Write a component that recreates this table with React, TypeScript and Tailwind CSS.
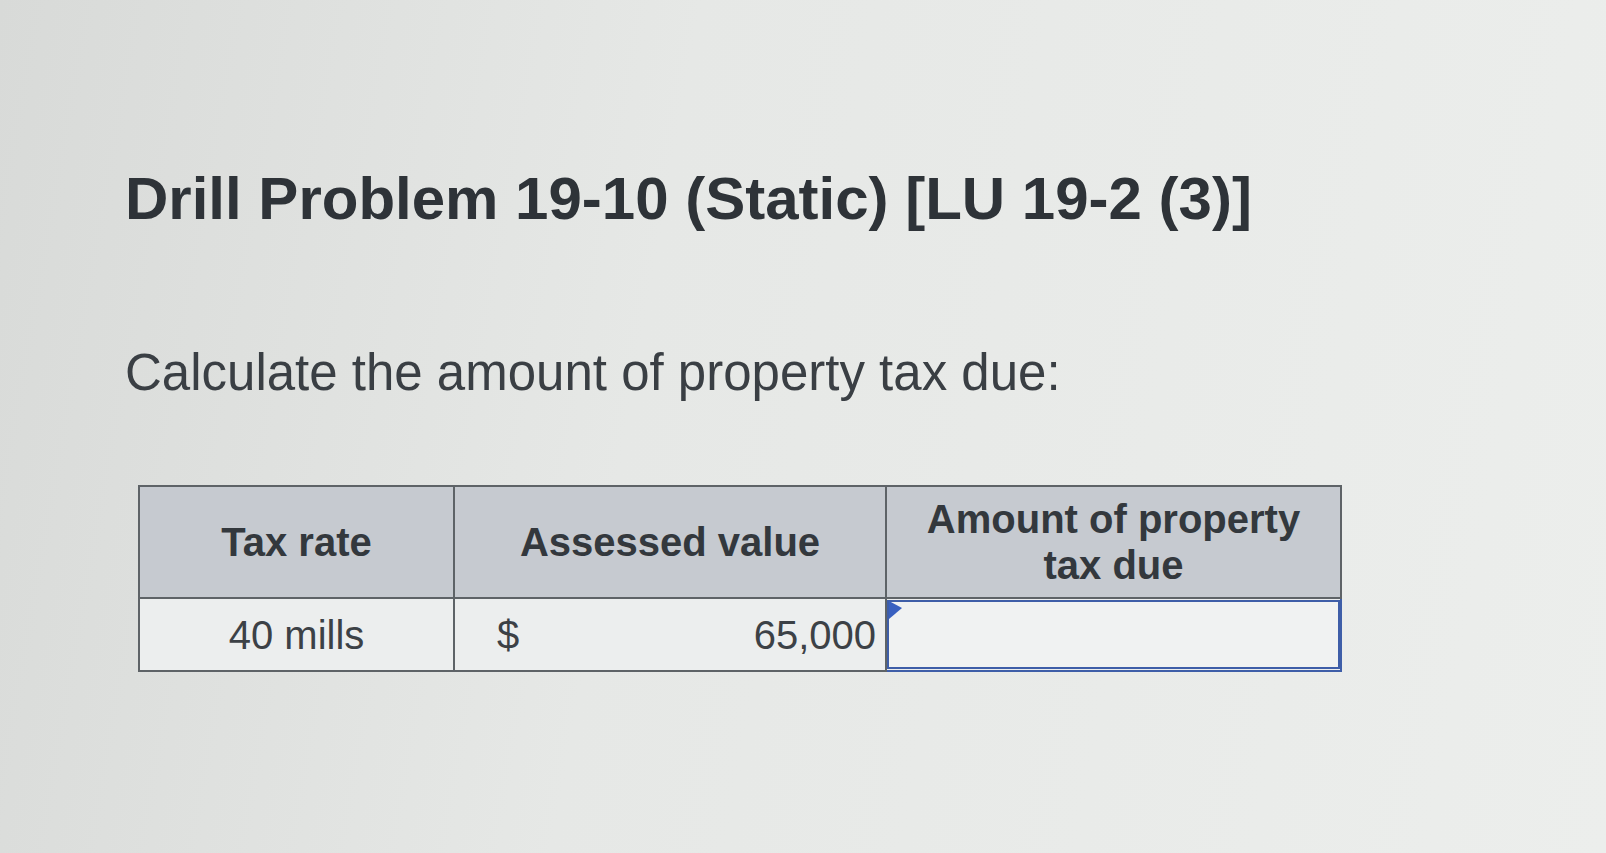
export default function App() {
  return (
    <div className="min-h-[853px] w-full bg-[linear-gradient(100deg,#d8dad8_0%,#e6e8e6_40%,#eceeec_100%)] font-['Liberation_Sans',Arial,sans-serif] text-[#30353a]">
      <div className="pl-[125px] pt-[169px]">
        {/* Title */}
        <h1 className="text-[60px] font-bold leading-none text-[#2e3338]">
          Drill Problem 19-10 (Static) [LU 19-2 (3)]
        </h1>

        {/* Prompt */}
        <p className="mt-[118px] text-[51px] leading-none text-[#3a3f44]">
          Calculate the amount of property tax due:
        </p>

        {/* Table */}
        <table className="mt-[87px] ml-[13px] border-collapse border-2 border-[#5e6367] text-[40px]">
          <thead>
            <tr className="h-[112px] bg-[#c6cad0]">
              <th className="w-[315px] border-2 border-[#5e6367] font-bold leading-[1.15] text-[#33383d]">Tax rate</th>
              <th className="w-[432px] border-2 border-[#5e6367] font-bold leading-[1.15] text-[#33383d]">Assessed value</th>
              <th className="w-[455px] border-2 border-[#5e6367] px-4 font-bold leading-[1.15] text-[#33383d]">
                Amount of property
                <br />
                tax due
              </th>
            </tr>
          </thead>
          <tbody>
            <tr className="h-[73px] bg-[#eceeee]">
              <td className="border-2 border-[#5e6367] text-center text-[#3c4146]">40 mills</td>
              <td className="border-2 border-[#5e6367] text-[#3c4146]">
                <div className="flex items-center justify-between pl-[42px] pr-[9px]">
                  <span>$</span>
                  <span>65,000</span>
                </div>
              </td>
              <td className="relative border-2 border-[#3e5ea8] p-0">
                <div className="h-[69px] w-full border-[2px] border-[#3e5ea8] bg-[#f0f2f2]" />
                <svg className="absolute left-[2px] top-[2px]" width="14" height="20" viewBox="0 0 14 20">
                  <polygon points="0,0 13,7 0,18" fill="#3860c0" />
                </svg>
              </td>
            </tr>
          </tbody>
        </table>
      </div>
    </div>
  )
}
